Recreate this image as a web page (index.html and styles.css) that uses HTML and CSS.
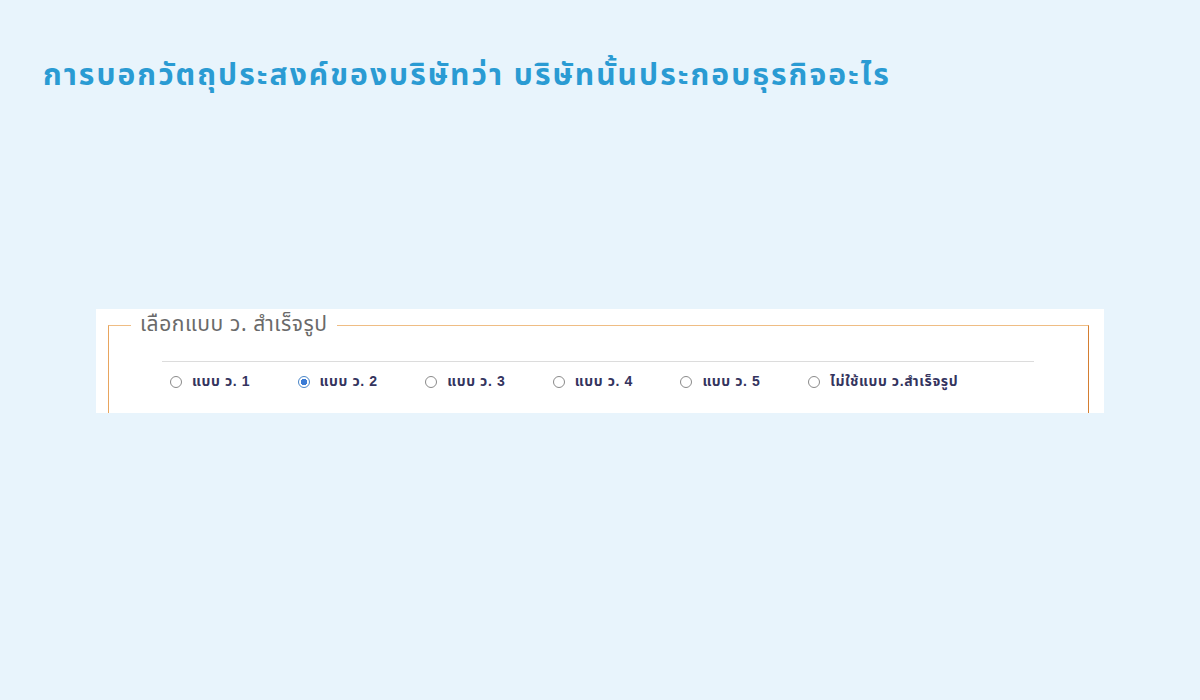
FILE: index.html
```html
<!DOCTYPE html>
<html lang="th">
  <head>
    <meta charset="UTF-8" />
    <meta name="viewport" content="width=device-width, initial-scale=1.0" />
    <title>วัตถุประสงค์ของบริษัท</title>
    <link rel="stylesheet" href="styles.css">
  </head>
  <body>
    <div class="page">
      <h1 class="title">การบอกวัตถุประสงค์ของบริษัทว่า บริษัทนั้นประกอบธุรกิจอะไร</h1>

      <div class="shot">
        <fieldset class="form-box">
          <legend>เลือกแบบ ว. สำเร็จรูป</legend>
          <div class="options">
            <label class="option"><input type="radio" name="form" /> แบบ ว. 1</label>
            <label class="option"><input type="radio" name="form" checked /> แบบ ว. 2</label>
            <label class="option"><input type="radio" name="form" /> แบบ ว. 3</label>
            <label class="option"><input type="radio" name="form" /> แบบ ว. 4</label>
            <label class="option"><input type="radio" name="form" /> แบบ ว. 5</label>
            <label class="option"><input type="radio" name="form" /> ไม่ใช้แบบ ว.สำเร็จรูป</label>
          </div>
        </fieldset>
      </div>
    </div>
  </body>
</html>
```

FILE: styles.css
```css
body {
  margin: 0;
  background: #e8f4fc;
  font-family: "Noto Sans Thai", "Noto Sans", "DejaVu Sans", sans-serif;
}

.page {
  padding: 53px 0 0;
}

.title {
  margin: 0 0 0 43px;
  font-size: 30px;
  line-height: 46px;
  font-weight: 700;
  letter-spacing: 2.05px;
  color: #2a9bd3;
}

.shot {
  width: 1008px;
  height: 104px;
  margin: 210px auto 0;
  padding: 3px 15px 0 12px;
  box-sizing: border-box;
  overflow: hidden;
  background: #fff;
}

.form-box {
  margin: 0;
  padding: 0 0 40px;
  border: 1px solid #e8a55e;
  border-top-color: #efbd84;
  border-right-color: #d47e31;
}

.form-box legend {
  margin-left: 22px;
  padding: 0 9px;
  font-size: 21px;
  line-height: 26px;
  letter-spacing: 0.6px;
  color: #6a6a6a;
}

.options {
  display: flex;
  margin: 23px 54px 0 53px;
  padding: 9px 0 0 8px;
  border-top: 1px solid #dcdcdc;
}

.option {
  display: flex;
  align-items: center;
  width: 127.6px;
  flex-shrink: 0;
  font-family: "Liberation Sans", "Noto Sans Thai", sans-serif;
  font-size: 14px;
  font-weight: 700;
  letter-spacing: 0.6px;
  color: #34345e;
  white-space: nowrap;
}

.option input {
  appearance: none;
  flex: none;
  width: 12px;
  height: 12px;
  margin: 0 10px 0 0;
  border: 1px solid #8a8a8a;
  border-radius: 50%;
  background: #fff;
}

.option input:checked {
  border-color: #4a86c8;
  background: radial-gradient(circle, #3a7bd5 0 3px, #fff 3.5px);
}
```
